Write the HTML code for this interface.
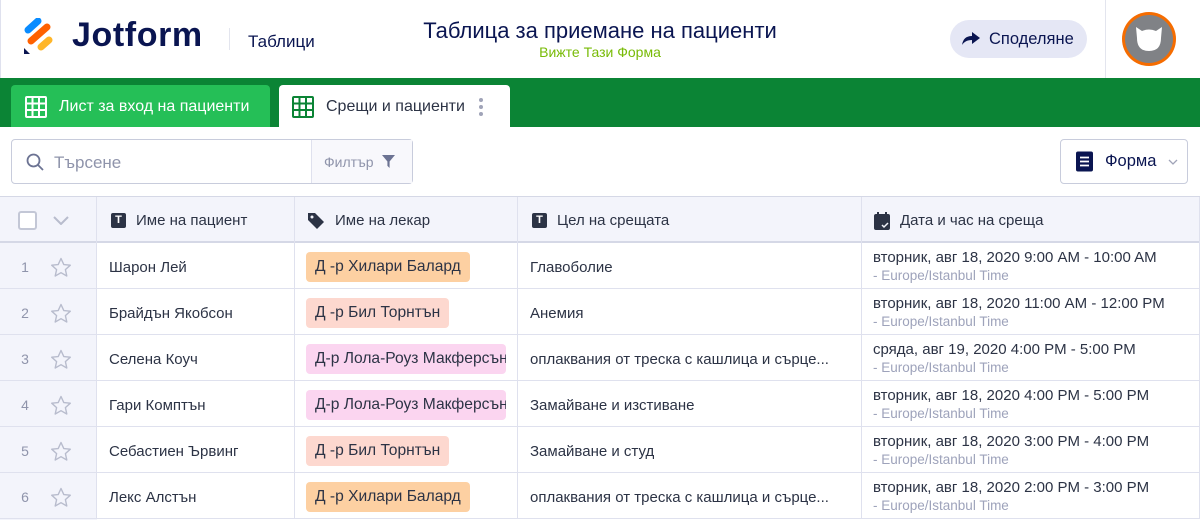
<!DOCTYPE html>
<html><head><meta charset="utf-8"><style>
*{box-sizing:border-box;margin:0;padding:0}
body{width:1200px;height:520px;overflow:hidden;background:#fff;font-family:"Liberation Sans",sans-serif;color:#2c3345;position:relative}
.abs{position:absolute}
.hdr{left:0;top:0;width:1200px;height:78px;border-left:1px solid #dfe1ee}
.green{left:0;top:78px;width:1200px;height:49px;background:#0b8435}
.tab{top:85px;height:42px;border-radius:4px 4px 0 0;display:flex;align-items:center;font-size:16px;padding-top:2px}
.cell{position:absolute;display:flex;align-items:center;font-size:15px;border-right:1px solid #dfe1ee;border-bottom:1px solid #dfe1ee;padding-top:3px}
.pill{padding:6px 9px;border-radius:4px;font-size:15.6px;color:#2c3345;white-space:nowrap;overflow:hidden}
.dt{font-size:15px;line-height:18px}
.dt small{display:block;font-size:13.5px;color:#9ea3bb}
</style></head><body>
<div class="abs hdr"></div>
<svg class="abs" style="left:22px;top:18px" width="34" height="36" viewBox="0 0 34 36">
<line x1="6" y1="12" x2="16" y2="3" stroke="#0a8cff" stroke-width="7" stroke-linecap="round"/>
<line x1="9" y1="23" x2="25" y2="9" stroke="#ff6100" stroke-width="7" stroke-linecap="round"/>
<line x1="19" y1="29" x2="27" y2="22" stroke="#ffb629" stroke-width="7" stroke-linecap="round"/>
<path d="M2 30 L8 36 L2 36Z" fill="#0a1551"/>
</svg>
<div class="abs" style="left:72px;top:16px;font-size:34px;font-weight:bold;color:#0a1551;letter-spacing:0.6px">Jotform</div>
<div class="abs" style="left:229px;top:28px;width:1px;height:22px;background:#e3e5ee"></div>
<div class="abs" style="left:248px;top:32px;font-size:17px;color:#0a1551">Таблици</div>
<div class="abs" style="left:0;width:1200px;top:18px;text-align:center;font-size:22px;color:#0a1551">Таблица за приемане на пациенти</div>
<div class="abs" style="left:0;width:1200px;top:44px;text-align:center;font-size:14px;color:#78bb07">Вижте Тази Форма</div>
<div class="abs" style="left:950px;top:20px;width:137px;height:38px;border-radius:19px;background:#e5e7f5;display:flex;align-items:center;font-size:16.5px;color:#0a1551">
<svg style="margin:0 9px 0 12px" width="18" height="14" viewBox="0 0 18 14"><path d="M10 0 L18 6 L10 12 V8 C5 8 2 10 0 13 C1 7 4 4 10 4Z" fill="#0a1551"/></svg>Споделяне</div>
<div class="abs" style="left:1105px;top:0;width:1px;height:78px;background:#e3e5ee"></div>
<div class="abs" style="left:1122px;top:12px;width:54px;height:54px;border-radius:50%;background:#f56c00;padding:3px"><div style="width:48px;height:48px;border-radius:50%;background:#808286;position:relative">
<svg style="position:absolute;left:9px;top:9px" width="30" height="30" viewBox="0 0 30 30"><path d="M2 3 L8 7 Q15 4 22 7 L28 3 L27 14 Q27 27 15 27 Q3 27 3 14Z" fill="#fff"/></svg></div></div>
<div class="abs green"></div>
<div class="abs tab" style="left:11px;width:259px;background:#25bf57;color:#fff">
<svg style="margin:0 12px 0 14px" width="22" height="22" viewBox="0 0 22 22"><rect x="1" y="1" width="20" height="20" rx="1" fill="none" stroke="#fff" stroke-width="2"/><path d="M1 7.5H21M1 14H21M7.5 1V21M14 1V21" stroke="#fff" stroke-width="2"/></svg>Лист за вход на пациенти</div>
<div class="abs tab" style="left:279px;width:231px;background:#fff;color:#2c3345">
<svg style="margin:0 12px 0 13px" width="22" height="22" viewBox="0 0 22 22"><rect x="1" y="1" width="20" height="20" rx="1" fill="none" stroke="#0b8435" stroke-width="2"/><path d="M1 7.5H21M1 14H21M7.5 1V21M14 1V21" stroke="#0b8435" stroke-width="2"/></svg>Срещи и пациенти
<svg style="margin-left:14px" width="4" height="18"><circle cx="2" cy="2" r="2" fill="#a0a4b8"/><circle cx="2" cy="9" r="2" fill="#a0a4b8"/><circle cx="2" cy="16" r="2" fill="#a0a4b8"/></svg></div>
<div class="abs" style="left:11px;top:139px;width:402px;height:45px;border:1px solid #c8ccdc;border-radius:4px;display:flex;align-items:center">
<svg style="margin:0 10px 0 14px" width="18" height="18" viewBox="0 0 18 18"><circle cx="7.5" cy="7.5" r="6" fill="none" stroke="#6c7393" stroke-width="1.8"/><path d="M12 12L17 17" stroke="#6c7393" stroke-width="1.8"/></svg>
<span style="font-size:17px;color:#8f94ab;width:257px;padding-top:2px">Търсене</span>
<div style="height:43px;width:101px;border-left:1px solid #dfe1ee;background:#f8f8fc;display:flex;align-items:center;padding-left:12px;font-size:14px;color:#8f94ab">Филтър<svg style="margin-left:8px" width="13" height="13" viewBox="0 0 12 12"><path d="M0 0H12L7 6V12L5 10V6Z" fill="#6c7393"/></svg></div></div>
<div class="abs" style="left:1060px;top:139px;width:128px;height:45px;border:1px solid #c8ccdc;border-radius:4px;display:flex;align-items:center;font-size:16.5px;color:#0a1551">
<svg style="margin:0 12px 0 15px" width="17" height="21" viewBox="0 0 17 20"><rect width="17" height="20" rx="2" fill="#0a1551"/><path d="M4 6H13M4 10H13M4 14H13" stroke="#fff" stroke-width="1.8"/></svg>Форма<svg style="margin-left:12px" width="10" height="6" viewBox="0 0 10 6"><path d="M1 1L5 5L9 1" fill="none" stroke="#a0a4b8" stroke-width="1.3"/></svg></div>

<div class="abs" style="left:0;top:196px;width:1200px;height:47px;background:#f3f4fb;border-top:1px solid #d5d8e6;border-bottom:2px solid #d5d8e6"></div>
<div class="abs" style="left:0;top:243px;width:97px;height:277px;background:#f3f4fb"></div>
<div id="t"></div>
<script>
const cols=[0,97,295,518,862,1200];
let h='';
const hd=[
['<span style="display:inline-block;width:19px;height:19px;border:2px solid #c3c7d6;border-radius:3px;margin-left:18px;background:#fff"></span><svg style="margin-left:16px" width="16" height="9" viewBox="0 0 16 9"><path d="M1 1L8 8L15 1" fill="none" stroke="#b8bccd" stroke-width="2"/></svg>'],
['<span style="display:inline-block;width:15px;height:15px;background:#2c3345;border-radius:2px;color:#fff;font-size:11px;font-weight:bold;text-align:center;line-height:15px;margin:0 10px 0 14px">T</span>Име на пациент'],
['<svg style="margin:0 10px 0 12px" width="18" height="18" viewBox="0 0 18 18"><path d="M1 1H8L17 10L10 17L1 8Z" fill="#2c3345"/><circle cx="5" cy="5" r="1.5" fill="#f3f4fb"/></svg>Име на лекар'],
['<span style="display:inline-block;width:15px;height:15px;background:#2c3345;border-radius:2px;color:#fff;font-size:11px;font-weight:bold;text-align:center;line-height:15px;margin:0 10px 0 14px">T</span>Цел на срещата'],
['<svg style="margin:0 10px 0 12px" width="16" height="18" viewBox="0 0 16 18"><rect x="0" y="2" width="16" height="16" rx="2" fill="#2c3345"/><rect x="3" y="0" width="2" height="4" fill="#2c3345"/><rect x="11" y="0" width="2" height="4" fill="#2c3345"/><path d="M8 13L10 15L14 11" stroke="#f3f4fb" stroke-width="1.5" fill="none"/></svg>Дата и час на среща']];
for(let i=0;i<5;i++){h+=`<div class="cell" style="left:${cols[i]}px;top:197px;width:${cols[i+1]-cols[i]}px;height:46px;border-bottom:none;padding-top:1px">${hd[i][0]}</div>`}
const rows=[
['Шарон Лей','Д -р Хилари Балард','#fdd0a2','Главоболие','вторник, авг 18, 2020 9:00 AM - 10:00 AM'],
['Брайдън Якобсон','Д -р Бил Торнтън','#fdd8cf','Анемия','вторник, авг 18, 2020 11:00 AM - 12:00 PM'],
['Селена Коуч','Д-р Лола-Роуз Макферсън','#fbd5f0','оплаквания от треска с кашлица и сърце...','сряда, авг 19, 2020 4:00 PM - 5:00 PM'],
['Гари Комптън','Д-р Лола-Роуз Макферсън','#fbd5f0','Замайване и изстиване','вторник, авг 18, 2020 4:00 PM - 5:00 PM'],
['Себастиен Ървинг','Д -р Бил Торнтън','#fdd8cf','Замайване и студ','вторник, авг 18, 2020 3:00 PM - 4:00 PM'],
['Лекс Алстън','Д -р Хилари Балард','#fdd0a2','оплаквания от треска с кашлица и сърце...','вторник, авг 18, 2020 2:00 PM - 3:00 PM']];
rows.forEach((r,k)=>{const y=243+k*46;
const c=[
`<span style="width:50px;text-align:center;color:#8f94ab;font-size:14px">${k+1}</span><svg width="22" height="21" viewBox="0 0 22 21"><path d="M11 1.5L13.8 7.6L20.3 8.2L15.4 12.6L16.8 19L11 15.7L5.2 19L6.6 12.6L1.7 8.2L8.2 7.6Z" fill="none" stroke="#b8bccd" stroke-width="1.4" stroke-linejoin="round"/></svg>`,
`<span style="padding-left:12px">${r[0]}</span>`,
`<span class="pill" style="margin-left:11px;background:${r[2]};max-width:200px">${r[1]}</span>`,
`<span style="padding-left:12px">${r[3]}</span>`,
`<div class="dt" style="padding-left:11px">${r[4]}<small>- Europe/Istanbul Time</small></div>`];
for(let i=0;i<5;i++)h+=`<div class="cell" style="left:${cols[i]}px;top:${y}px;width:${cols[i+1]-cols[i]}px;height:46px">${c[i]}</div>`;});
document.getElementById('t').innerHTML=h;
</script>
</body></html>
